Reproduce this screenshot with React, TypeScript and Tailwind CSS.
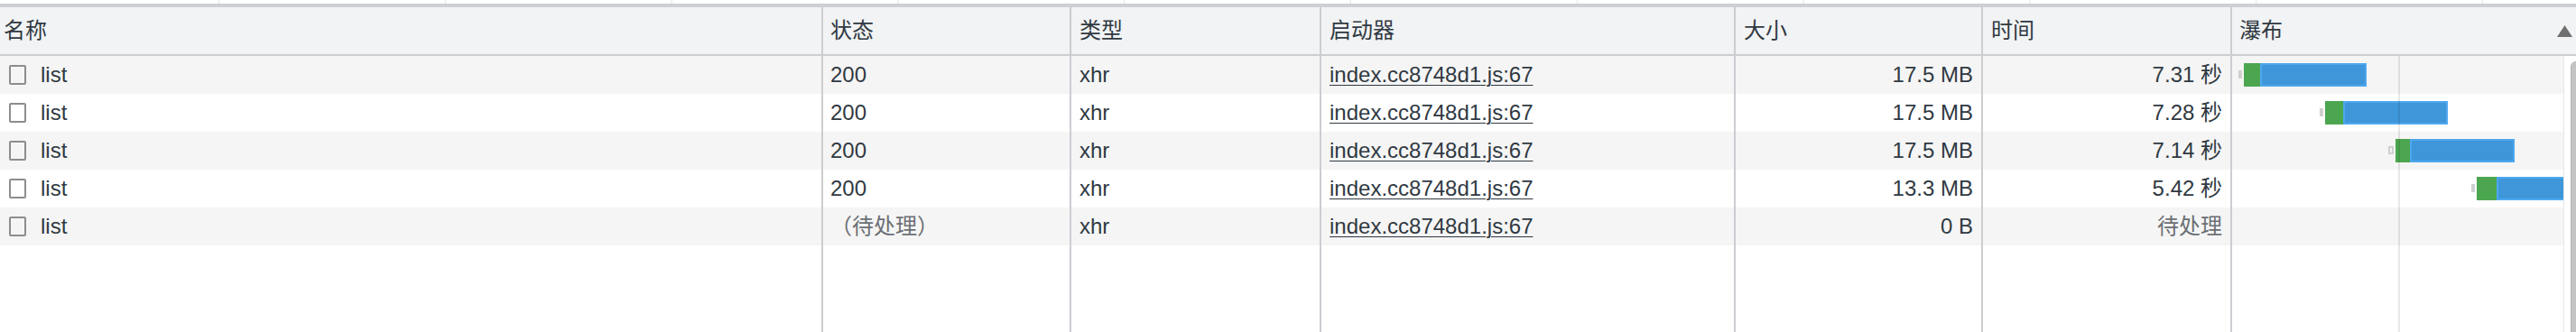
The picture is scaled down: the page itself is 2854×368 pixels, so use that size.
import type { FC } from "react";

type Bar = { tick: number; hollow?: boolean; green: number; gw: number; blue: number; bw: number };
type Row = { status: string; size: string; time: string; pending?: boolean; bar?: Bar };

const ROWS: Row[] = [
  { status: "200", size: "17.5 MB", time: "7.31 秒", bar: { tick: 7, green: 13, gw: 18, blue: 31, bw: 118 } },
  { status: "200", size: "17.5 MB", time: "7.28 秒", bar: { tick: 97, green: 103, gw: 20, blue: 123, bw: 116 } },
  { status: "200", size: "17.5 MB", time: "7.14 秒", bar: { tick: 173, hollow: true, green: 181, gw: 16, blue: 197, bw: 116 } },
  { status: "200", size: "13.3 MB", time: "5.42 秒", bar: { tick: 265, green: 271, gw: 22, blue: 293, bw: 120 } },
  { status: "（待处理）", size: "0 B", time: "待处理", pending: true },
];

const TICKS = Array.from({ length: 11 }, (_, i) => 242 + 250.8 * i);

const line = "border-l-2 border-[#cbcdd1]";

const App: FC = () => {
  return (
    <div className="flex h-[368px] w-[2854px] flex-col overflow-hidden bg-white font-['Liberation_Sans','Noto_Sans_CJK_SC',sans-serif] text-[24px] text-[#303942]">
      {/* overview ticks */}
      <svg width="2854" height="4" className="block shrink-0">
        {TICKS.map((x) => (
          <rect key={x} x={x} y={0} width={1} height={4} fill="#e2e3e5" />
        ))}
      </svg>
      <div className="h-[4px] shrink-0 bg-[#cdcfd3]" />

      {/* HEADER */}
      <div className="flex h-[54px] shrink-0 border-b-2 border-[#cbcdd1] bg-[#f1f3f4]">
        <div className="flex w-[910px] items-center pl-[4px]">名称</div>
        <div className={`flex w-[275px] items-center pl-[8px] ${line}`}>状态</div>
        <div className={`flex w-[277px] items-center pl-[9px] ${line}`}>类型</div>
        <div className={`flex w-[459px] items-center pl-[9px] ${line}`}>启动器</div>
        <div className={`flex w-[274px] items-center pl-[9px] ${line}`}>大小</div>
        <div className={`flex w-[276px] items-center pl-[9px] ${line}`}>时间</div>
        <div className={`flex flex-1 items-center justify-between pl-[8px] pr-[4px] ${line}`}>
          <span>瀑布</span>
          <svg width="17" height="13" viewBox="0 0 17 13">
            <polygon points="8.5,0 17,13 0,13" fill="#6f6f6f" />
          </svg>
        </div>
      </div>

      {/* BODY */}
      <div className="relative flex flex-1 flex-col">
        {ROWS.map((r, i) => (
          <div key={i} className={`flex h-[42px] shrink-0 ${i % 2 === 0 ? "bg-[#f5f5f5]" : "bg-white"}`}>
            <div className="flex w-[910px] items-center pl-[10px]">
              <div className="h-[22px] w-[19px] rounded-[2px] border-2 border-[#8d8d8d]" />
              <span className="ml-[16px]">list</span>
            </div>
            <div className={`flex w-[275px] items-center pl-[8px] ${line} ${r.pending ? "text-[#6b6f74]" : ""}`}>
              {r.status}
            </div>
            <div className={`flex w-[277px] items-center pl-[9px] ${line}`}>xhr</div>
            <div className={`flex w-[459px] items-center pl-[9px] ${line}`}>
              <span className="underline decoration-1 underline-offset-[3px]">index.cc8748d1.js:67</span>
            </div>
            <div className={`flex w-[274px] items-center justify-end pr-[9px] ${line}`}>{r.size}</div>
            <div className={`flex w-[276px] items-center justify-end pr-[9px] ${line} ${r.pending ? "text-[#6b6f74]" : ""}`}>
              {r.time}
            </div>
            <div className={`relative flex-1 overflow-hidden ${line}`}>
              {r.bar && (
                <>
                  <div
                    className={`absolute top-[16px] h-[9px] ${r.bar.hollow ? "w-[6px] border-2 border-[#cfcfcf]" : "w-[4px] bg-[#d0d0d0]"}`}
                    style={{ left: r.bar.tick }}
                  />
                  <div
                    className="absolute top-[8px] h-[26px] bg-[#4ca64f]"
                    style={{ left: r.bar.green, width: r.bar.gw }}
                  />
                  <div
                    className="absolute top-[8px] h-[26px] border-2 border-[#4ea8ef] bg-[#3f97da]"
                    style={{ left: r.bar.blue, width: r.bar.bw }}
                  />
                </>
              )}
            </div>
          </div>
        ))}

        {/* empty space keeps the column lines */}
        <div className="flex flex-1">
          <div className="w-[910px]" />
          <div className={`w-[275px] ${line}`} />
          <div className={`w-[277px] ${line}`} />
          <div className={`w-[459px] ${line}`} />
          <div className={`w-[274px] ${line}`} />
          <div className={`w-[276px] ${line}`} />
          <div className={`flex-1 ${line}`} />
        </div>

        {/* waterfall grid line */}
        <div className="pointer-events-none absolute bottom-0 left-[2657px] top-0 w-[2px] bg-[rgba(0,0,0,0.09)]" />

        {/* scrollbar */}
        <div className="absolute bottom-0 left-[2840px] top-0 w-[14px] border-l border-[#e6e6e6] bg-white">
          <div className="absolute bottom-[-20px] left-[7px] top-[6px] w-[12px] rounded-full border border-[#b5b5b5] bg-[#c4c4c4]" />
        </div>
      </div>
    </div>
  );
};

export default App;
